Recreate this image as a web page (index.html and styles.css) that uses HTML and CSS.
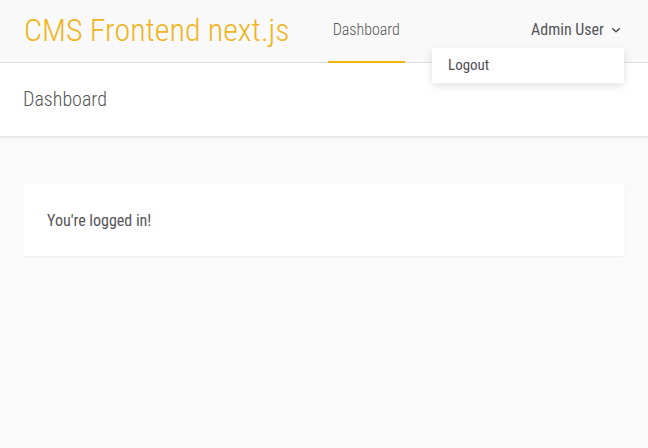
FILE: index.html
```html
<!DOCTYPE html>
<html lang="en">
<head>
<meta charset="utf-8">
<title>CMS Frontend next.js</title>
<link rel="stylesheet" href="styles.css">
</head>
<body>
<header class="topbar">
  <div class="brand">CMS Frontend next.js</div>
  <nav class="nav">
    <a class="nav-link active" href="#">Dashboard</a>
  </nav>
  <div class="user">
    <button class="user-btn">Admin User
      <svg class="chev" width="10" height="6" viewBox="0 0 10 6"><path d="M1.2 1.2 L5 4.8 L8.8 1.2" fill="none" stroke="#555" stroke-width="1.5"/></svg>
    </button>
    <div class="menu">
      <a class="menu-item" href="#">Logout</a>
    </div>
  </div>
</header>
<section class="page-head">
  <h1 class="page-title">Dashboard</h1>
</section>
<main class="content">
  <div class="card">You're logged in!</div>
</main>
</body>
</html>
```
FILE: styles.css
```css
* { box-sizing: border-box; }
html, body { margin: 0; padding: 0; }
body {
  background: #fafafa;
  font-family: Roboto, "Noto Sans", sans-serif;
  font-stretch: 75%;
  color: #555;
  height: 448px;
}
.topbar {
  display: flex;
  align-items: stretch;
  height: 63px;
  padding: 0 24px 0 24px;
  border-bottom: 1px solid #e2e2e2;
  background: #f9f9f9;
}
.brand {
  font-size: 32px;
  font-weight: 300;
  color: #f0b41c;
  line-height: 60px;
}
.nav { display: flex; margin-left: 38px; }
.nav-link {
  display: block;
  padding: 0 5px;
  line-height: 60px;
  font-size: 16px;
  font-weight: 300;
  color: #555;
  text-decoration: none;
  border-bottom: 2px solid #efb50c;
  margin-bottom: -1px;
}
.user { margin-left: auto; position: relative; }
.user-btn {
  display: flex;
  align-items: center;
  gap: 7px;
  height: 59px;
  padding: 0 3px 0 0;
  border: 0;
  background: none;
  font: inherit;
  font-size: 16px;
  font-weight: 400;
  color: #55555a;
}
.chev { margin-top: 1px; }
.menu {
  position: absolute;
  top: 48px;
  right: 0;
  width: 192px;
  background: #fff;
  box-shadow: 0 3px 8px rgba(0,0,0,0.12);
  padding: 8px 0;
}
.menu-item {
  display: block;
  padding: 0 16px;
  line-height: 19px;
  font-size: 15px;
  color: #4f4f55;
  text-decoration: none;
}
.page-head {
  background: #fff;
  height: 73px;
  display: flex;
  align-items: center;
  padding: 0 23px 2px;
  box-shadow: 0 1px 3px rgba(0,0,0,0.12);
}
.page-title {
  margin: 0;
  font-size: 20px;
  font-weight: 300;
  color: #555;
}
.content { padding: 48px 24px 0 23px; }
.card {
  background: #fff;
  height: 72px;
  display: flex;
  align-items: center;
  padding: 0 24px;
  font-size: 16px;
  color: #55555a;
  box-shadow: 0 1px 2px rgba(0,0,0,0.05);
}
```
